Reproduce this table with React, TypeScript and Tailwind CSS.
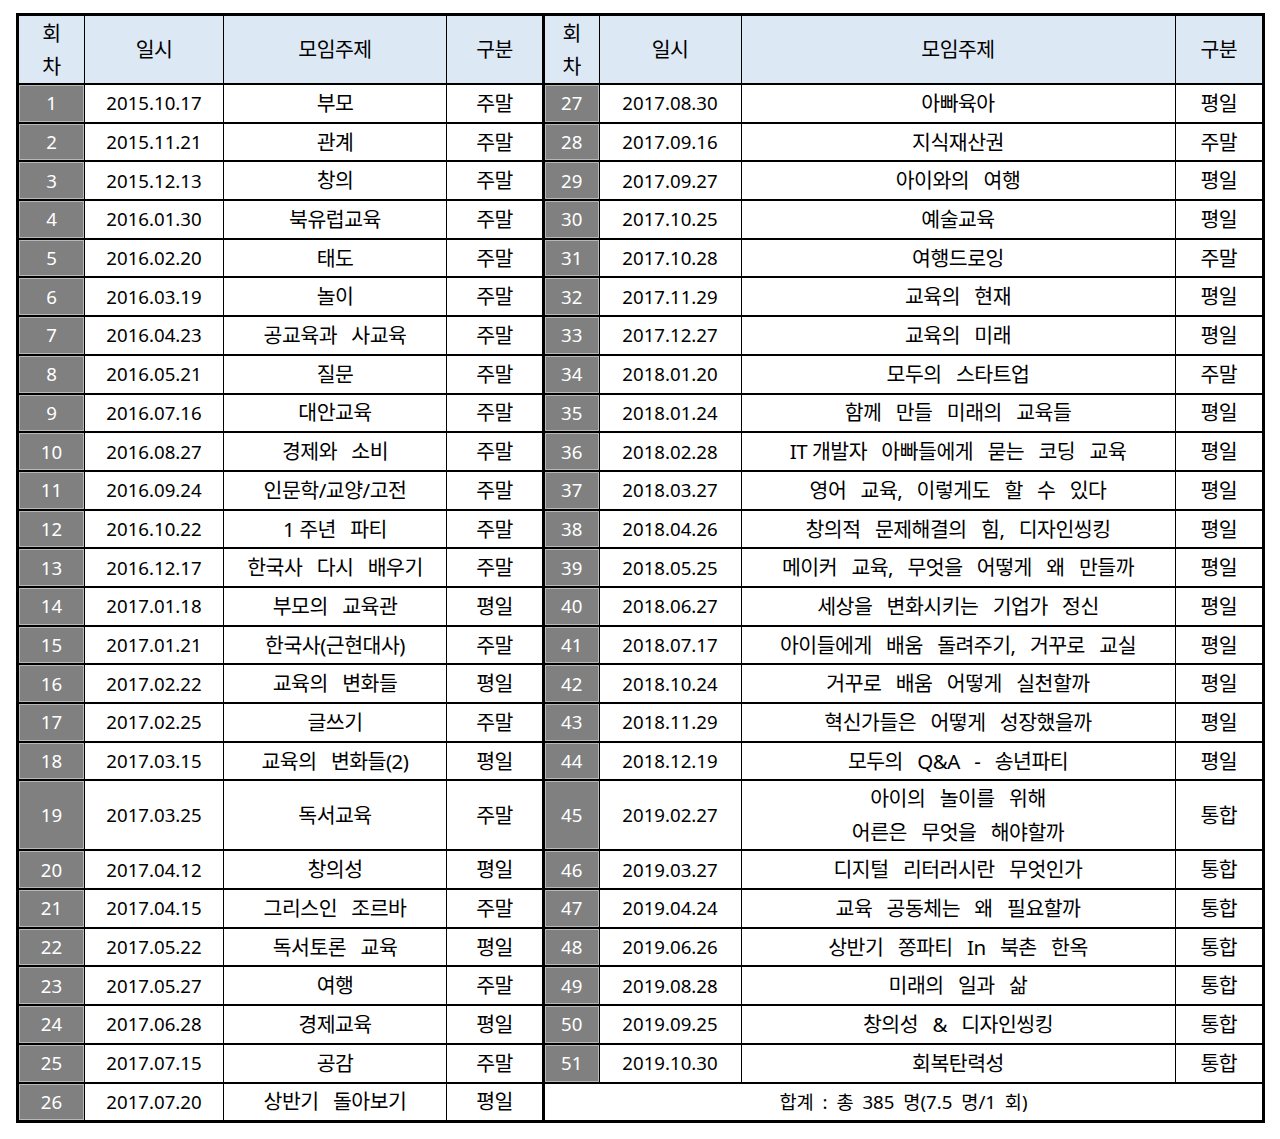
const left: [string, string, string, string][] = [
  ['1', '2015.10.17', '부모', '주말'],
  ['2', '2015.11.21', '관계', '주말'],
  ['3', '2015.12.13', '창의', '주말'],
  ['4', '2016.01.30', '북유럽교육', '주말'],
  ['5', '2016.02.20', '태도', '주말'],
  ['6', '2016.03.19', '놀이', '주말'],
  ['7', '2016.04.23', '공교육과 사교육', '주말'],
  ['8', '2016.05.21', '질문', '주말'],
  ['9', '2016.07.16', '대안교육', '주말'],
  ['10', '2016.08.27', '경제와 소비', '주말'],
  ['11', '2016.09.24', '인문학/교양/고전', '주말'],
  ['12', '2016.10.22', '1 주년 파티', '주말'],
  ['13', '2016.12.17', '한국사 다시 배우기', '주말'],
  ['14', '2017.01.18', '부모의 교육관', '평일'],
  ['15', '2017.01.21', '한국사(근현대사)', '주말'],
  ['16', '2017.02.22', '교육의 변화들', '평일'],
  ['17', '2017.02.25', '글쓰기', '주말'],
  ['18', '2017.03.15', '교육의 변화들(2)', '평일'],
  ['19', '2017.03.25', '독서교육', '주말'],
  ['20', '2017.04.12', '창의성', '평일'],
  ['21', '2017.04.15', '그리스인 조르바', '주말'],
  ['22', '2017.05.22', '독서토론 교육', '평일'],
  ['23', '2017.05.27', '여행', '주말'],
  ['24', '2017.06.28', '경제교육', '평일'],
  ['25', '2017.07.15', '공감', '주말'],
  ['26', '2017.07.20', '상반기 돌아보기', '평일'],
];

const right: [string, string, string, string][] = [
  ['27', '2017.08.30', '아빠육아', '평일'],
  ['28', '2017.09.16', '지식재산권', '주말'],
  ['29', '2017.09.27', '아이와의 여행', '평일'],
  ['30', '2017.10.25', '예술교육', '평일'],
  ['31', '2017.10.28', '여행드로잉', '주말'],
  ['32', '2017.11.29', '교육의 현재', '평일'],
  ['33', '2017.12.27', '교육의 미래', '평일'],
  ['34', '2018.01.20', '모두의 스타트업', '주말'],
  ['35', '2018.01.24', '함께 만들 미래의 교육들', '평일'],
  ['36', '2018.02.28', 'IT 개발자 아빠들에게 묻는 코딩 교육', '평일'],
  ['37', '2018.03.27', '영어 교육, 이렇게도 할 수 있다', '평일'],
  ['38', '2018.04.26', '창의적 문제해결의 힘, 디자인씽킹', '평일'],
  ['39', '2018.05.25', '메이커 교육, 무엇을 어떻게 왜 만들까', '평일'],
  ['40', '2018.06.27', '세상을 변화시키는 기업가 정신', '평일'],
  ['41', '2018.07.17', '아이들에게 배움 돌려주기, 거꾸로 교실', '평일'],
  ['42', '2018.10.24', '거꾸로 배움 어떻게 실천할까', '평일'],
  ['43', '2018.11.29', '혁신가들은 어떻게 성장했을까', '평일'],
  ['44', '2018.12.19', '모두의 Q&A - 송년파티', '평일'],
  ['45', '2019.02.27', '아이의 놀이를 위해|어른은 무엇을 해야할까', '통합'],
  ['46', '2019.03.27', '디지털 리터러시란 무엇인가', '통합'],
  ['47', '2019.04.24', '교육 공동체는 왜 필요할까', '통합'],
  ['48', '2019.06.26', '상반기 쫑파티 In 북촌 한옥', '통합'],
  ['49', '2019.08.28', '미래의 일과 삶', '통합'],
  ['50', '2019.09.25', '창의성 & 디자인씽킹', '통합'],
  ['51', '2019.10.30', '회복탄력성', '통합'],
];

// hangul in the original is a bit bigger than the digits
const kor = 'text-[20.5px] tracking-[-0.5px]';
const th = 'bg-[#dde8f5] border-r border-b-2 border-black font-normal text-center align-middle ' + kor;
const td = 'border-r border-b-2 border-black text-center align-middle whitespace-nowrap';
const num = 'border-r border-b-2 border-black bg-[#808080] text-white text-center align-middle shadow-[inset_0_0_0_1px_#b8b8b8]';

function Topic({ text }: { text: string }) {
  if (text.includes('|')) {
    const [a, b] = text.split('|');
    return (
      <div className="leading-[34px]">
        <div>{a}</div>
        <div>{b}</div>
      </div>
    );
  }
  if (text.startsWith('IT ') || text.startsWith('1 ')) {
    const i = text.indexOf(' ');
    return (
      <span>
        <span className="[word-spacing:0px]">{text.slice(0, i + 1)}</span>
        {text.slice(i + 1)}
      </span>
    );
  }
  return <span>{text}</span>;
}

export default function App() {
  return (
    <div className="bg-white min-h-[1139px] pt-[13px] pl-[16px] font-['Noto_Sans','Noto_Sans_CJK_KR',sans-serif] text-[18.67px] text-black">
      <table className="table-fixed border-collapse border-[3px] border-black w-[1249px]">
        <colgroup>
          <col className="w-[67px]" />
          <col className="w-[139px]" />
          <col className="w-[223px]" />
          <col className="w-[97px]" />
          <col className="w-[55.5px]" />
          <col className="w-[142px]" />
          <col className="w-[434px]" />
          <col className="w-[88.5px]" />
        </colgroup>
        <thead>
          <tr className="h-[69.5px]">
            <th className={th}>
              <div className="leading-[33px]">회<br />차</div>
            </th>
            <th className={th}>일시</th>
            <th className={th}>모임주제</th>
            <th className={th + ' border-r-[3px]'}>구분</th>
            <th className={th}>
              <div className="leading-[33px]">회<br />차</div>
            </th>
            <th className={th}>일시</th>
            <th className={th}>모임주제</th>
            <th className={th}>구분</th>
          </tr>
        </thead>
        <tbody>
          {left.map((l, i) => {
            const r = right[i];
            const tall = l[0] === '19';
            return (
              <tr key={l[0]} className={tall ? 'h-[70px]' : 'h-[38.7px]'}>
                <td className={num}>{l[0]}</td>
                <td className={td}>{l[1]}</td>
                <td className={td + ' ' + kor + ' [word-spacing:9.5px]'}>
                  <Topic text={l[2]} />
                </td>
                <td className={td + ' ' + kor + ' border-r-[3px]'}>{l[3]}</td>
                {r ? (
                  <>
                    <td className={num}>{r[0]}</td>
                    <td className={td}>{r[1]}</td>
                    <td className={td + ' ' + kor + ' [word-spacing:9.5px]'}>
                      <Topic text={r[2]} />
                    </td>
                    <td className={td + ' ' + kor}>{r[3]}</td>
                  </>
                ) : (
                  <td colSpan={4} className={td + ' [word-spacing:4px]'}>
                    합계 : 총 385 명(7.5 명/1 회)
                  </td>
                )}
              </tr>
            );
          })}
        </tbody>
      </table>
    </div>
  );
}
